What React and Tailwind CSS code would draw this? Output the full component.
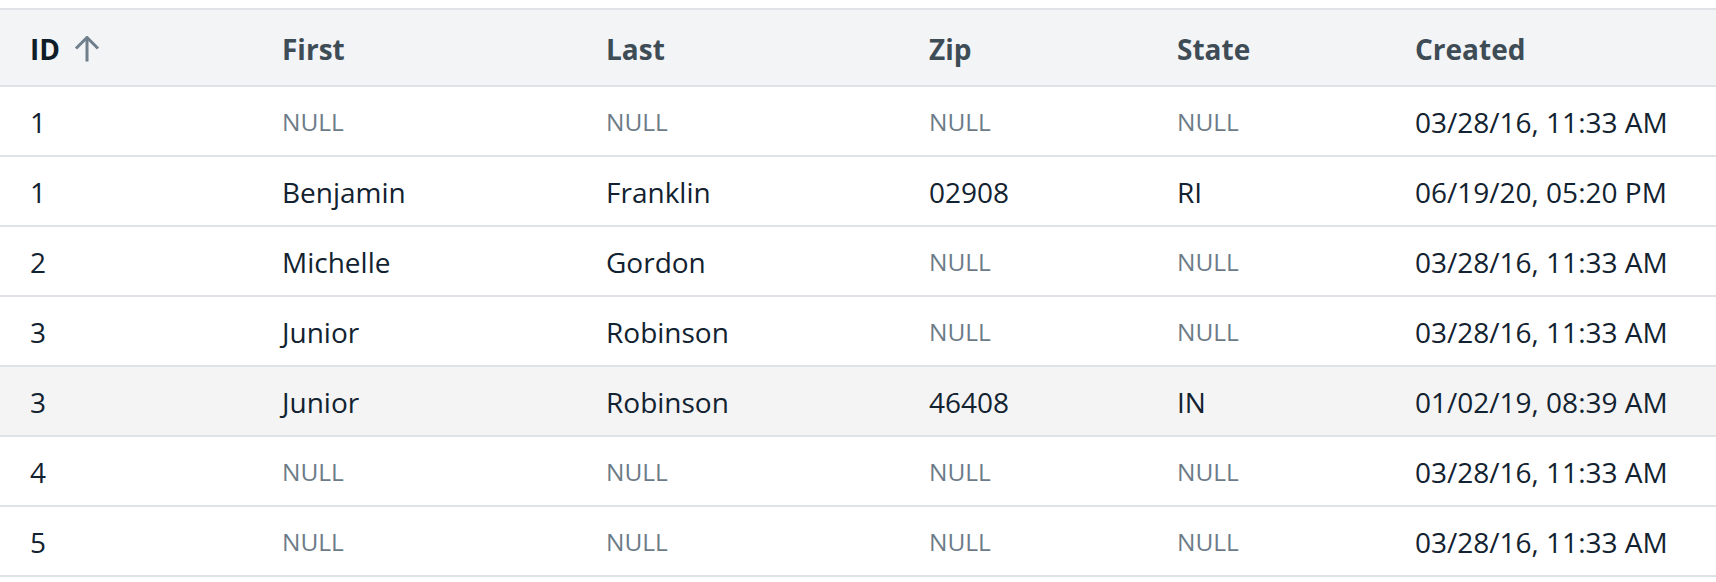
import React from "react";

const rows = [
  { id: "1", first: null, last: null, zip: null, state: null, created: "03/28/16, 11:33 AM" },
  { id: "1", first: "Benjamin", last: "Franklin", zip: "02908", state: "RI", created: "06/19/20, 05:20 PM" },
  { id: "2", first: "Michelle", last: "Gordon", zip: null, state: null, created: "03/28/16, 11:33 AM" },
  { id: "3", first: "Junior", last: "Robinson", zip: null, state: null, created: "03/28/16, 11:33 AM" },
  { id: "3", first: "Junior", last: "Robinson", zip: "46408", state: "IN", created: "01/02/19, 08:39 AM", hover: true },
  { id: "4", first: null, last: null, zip: null, state: null, created: "03/28/16, 11:33 AM" },
  { id: "5", first: null, last: null, zip: null, state: null, created: "03/28/16, 11:33 AM" },
];

const cols = "grid grid-cols-[252px_324px_323px_248px_238px_1fr]";

function Cell({ value }) {
  if (value === null) {
    return <div className="pl-[30px] pt-[3px] flex items-center text-[24.5px] text-[#6c7b87] uppercase">NULL</div>;
  }
  return <div className="pl-[30px] pt-[2px] flex items-center text-[28px] text-[#122230]">{value}</div>;
}

function SortUp() {
  return (
    <svg width="26" height="26" viewBox="0 0 26 26" fill="none" stroke="#6f7f8b" strokeWidth="3">
      <path d="M13 1.5v24" />
      <path d="M2 12.5L13 1.5l11 11" />
    </svg>
  );
}

export default function App() {
  return (
    <div className="w-[1716px] h-[582px] bg-white pt-[8px]" style={{ fontFamily: '"Open Sans", sans-serif' }}>
      <div className={`${cols} h-[79px] bg-[#f2f4f6] border-y-2 border-[#dfe3e8] font-bold text-[28px] text-[#3e4c56]`}>
        <div className="pl-[30px] pt-[3px] flex items-center gap-[14px] text-[#0f1d28]">
          ID <SortUp />
        </div>
        <div className="pl-[30px] pt-[3px] flex items-center">First</div>
        <div className="pl-[30px] pt-[3px] flex items-center">Last</div>
        <div className="pl-[30px] pt-[3px] flex items-center">Zip</div>
        <div className="pl-[30px] pt-[3px] flex items-center">State</div>
        <div className="pl-[30px] pt-[3px] flex items-center">Created</div>
      </div>
      {rows.map((r, i) => (
        <div key={i} className={`${cols} h-[70px] border-b-2 border-[#dfe3e8] ${r.hover ? "bg-[#f4f4f4]" : "bg-white"}`}>
          <Cell value={r.id} />
          <Cell value={r.first} />
          <Cell value={r.last} />
          <Cell value={r.zip} />
          <Cell value={r.state} />
          <Cell value={r.created} />
        </div>
      ))}
    </div>
  );
}
